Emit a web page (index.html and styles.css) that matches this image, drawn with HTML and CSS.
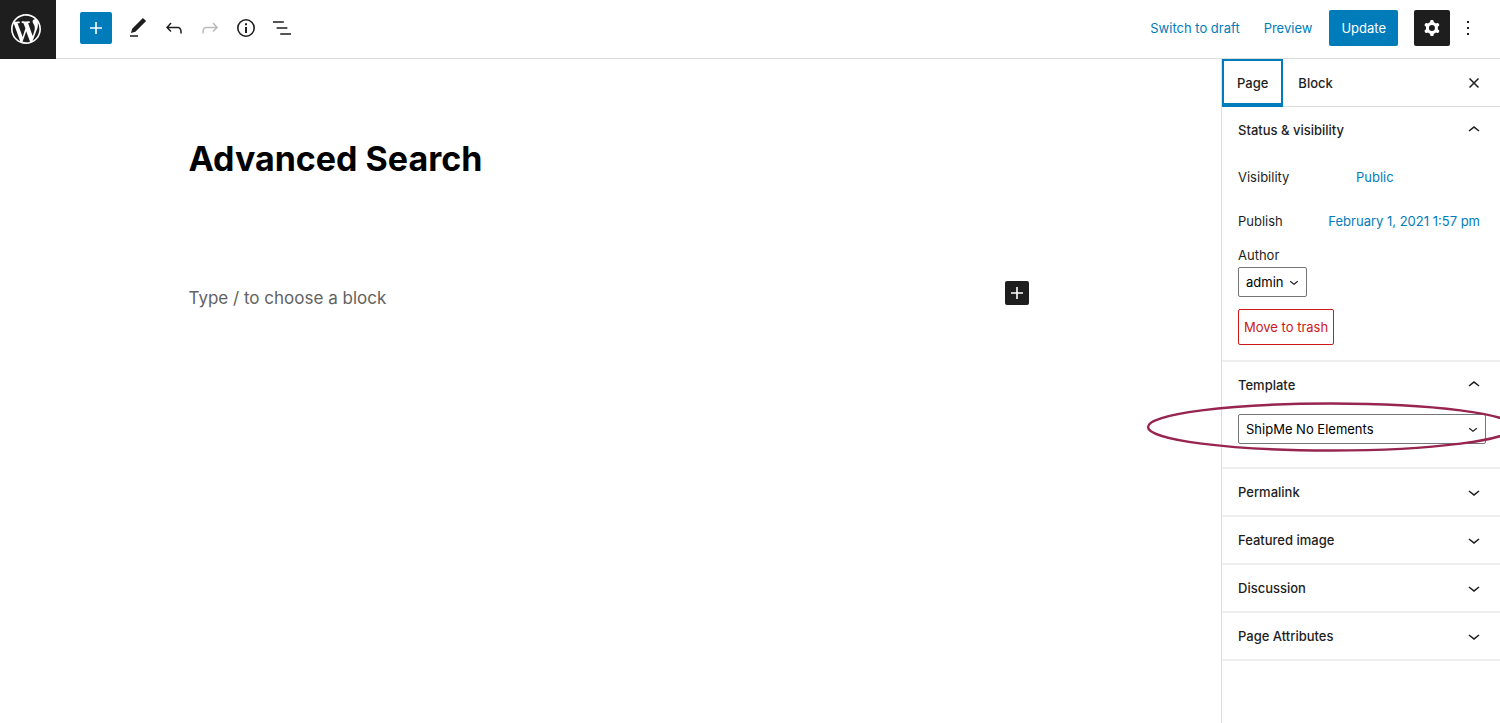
FILE: index.html
```html
<!DOCTYPE html>
<html lang="en">
<head>
<meta charset="utf-8">
<title>Edit Page</title>
<link rel="stylesheet" href="styles.css">
</head>
<body>
<div class="editor">
  <header class="topbar">
    <a class="site-logo" href="#" aria-label="View pages">
      <svg width="36" height="36" viewBox="-2 -2 24 24"><path d="M20 10c0-5.51-4.49-10-10-10C4.48 0 0 4.49 0 10c0 5.52 4.48 10 10 10 5.51 0 10-4.48 10-10zM7.78 15.37L4.37 6.22c.55-.02 1.17-.08 1.17-.08.5-.06.44-1.13-.06-1.11 0 0-1.45.11-2.37.11-.18 0-.37 0-.58-.01C4.12 2.69 6.87 1.11 10 1.11c2.33 0 4.45.87 6.05 2.34-.68-.11-1.65.39-1.65 1.58 0 .74.45 1.36.9 2.1.35.61.55 1.36.55 2.46 0 1.49-1.4 5-1.4 5l-3.03-8.37c.54-.02.82-.17.82-.17.5-.05.44-1.25-.06-1.22 0 0-1.44.12-2.38.12-.87 0-2.33-.12-2.33-.12-.5-.03-.56 1.2-.06 1.22l.92.08 1.26 3.41zM17.41 10c.24-.64.74-1.87.43-4.25.7 1.29 1.05 2.71 1.05 4.25 0 3.29-1.73 6.24-4.4 7.78.97-2.59 1.94-5.2 2.92-7.78zM6.1 18.09C3.12 16.65 1.11 13.53 1.11 10c0-1.3.23-2.48.72-3.59C3.25 10.3 4.67 14.2 6.1 18.09zm4.03-6.63l2.58 6.98c-.86.29-1.76.45-2.71.45-.79 0-1.57-.11-2.29-.33.81-2.38 1.62-4.74 2.42-7.1z"/></svg>
    </a>
    <div class="tools">
      <button class="add-block" aria-label="Add block"><svg width="24" height="24" viewBox="0 0 24 24"><path d="M18 11.2h-5.2V6h-1.6v5.2H6v1.6h5.2V18h1.6v-5.2H18z"/></svg></button>
      <button class="tool" aria-label="Tools"><svg width="24" height="24" viewBox="0 0 24 24"><path d="M20.1 5.1L16.9 2 6.2 12.7l-1.3 4.4 4.5-1.3L20.1 5.1zM4 20.8h8v-1.5H4v1.5z"/></svg></button>
      <button class="tool" aria-label="Undo"><svg width="24" height="24" viewBox="0 0 24 24"><path d="M18.3 11.7c-.6-.6-1.4-.9-2.3-.9H6.7l2.9-3.3-1.1-1-4.5 5L8.5 16l1-1-2.7-2.7H16c.5 0 .9.2 1.3.5 1 1 1 3.4 1 4.5v.3h1.5v-.2c0-1.5 0-4.3-1.5-5.7z"/></svg></button>
      <button class="tool" aria-label="Redo" disabled><svg width="24" height="24" viewBox="0 0 24 24"><path d="M15.6 6.5l-1.1 1 2.9 3.3H8c-.9 0-1.7.3-2.3.9-1.4 1.5-1.4 4.2-1.4 5.6v.2h1.5v-.3c0-1.1 0-3.5 1-4.5.3-.3.7-.5 1.3-.5h9.2L14.5 15l1.1 1.1 4.6-4.6-4.6-5z"/></svg></button>
      <button class="tool" aria-label="Details"><svg width="24" height="24" viewBox="0 0 24 24"><circle cx="12" cy="12" r="8.2" fill="none" stroke="currentColor" stroke-width="1.6"/><path d="M11 7.2h2v2h-2zM11 11h2v6h-2z"/></svg></button>
      <button class="tool" aria-label="List view"><svg width="24" height="24" viewBox="0 0 24 24"><path d="M13.8 5.2H3v1.5h10.8V5.2zm-3.6 12v1.5H21v-1.5H10.2zm7.2-6H6.6v1.5h10.8v-1.5z"/></svg></button>
    </div>
    <div class="actions">
      <button class="text-button">Switch to draft</button>
      <button class="text-button">Preview</button>
      <button class="update">Update</button>
      <button class="settings" aria-label="Settings"><svg width="24" height="24" viewBox="0 0 24 24"><path fill-rule="evenodd" d="M10.289 4.836A1 1 0 0111.275 4h1.306a1 1 0 01.987.836l.244 1.466c.787.26 1.503.679 2.108 1.218l1.393-.522a1 1 0 011.216.437l.653 1.13a1 1 0 01-.23 1.273l-1.148.944a6.025 6.025 0 010 2.435l1.149.946a1 1 0 01.23 1.272l-.653 1.13a1 1 0 01-1.216.437l-1.394-.522c-.605.54-1.32.958-2.108 1.218l-.244 1.466a1 1 0 01-.987.836h-1.306a1 1 0 01-.986-.836l-.244-1.466a5.995 5.995 0 01-2.108-1.218l-1.394.522a1 1 0 01-1.217-.436l-.653-1.131a1 1 0 01.23-1.272l1.149-.946a6.026 6.026 0 010-2.435l-1.148-.944a1 1 0 01-.23-1.272l.653-1.131a1 1 0 011.217-.437l1.393.522a5.994 5.994 0 012.108-1.218l.244-1.466zM14.929 12a3 3 0 11-6 0 3 3 0 016 0z"/></svg></button>
      <button class="tool" aria-label="Options"><svg width="24" height="24" viewBox="0 0 24 24"><path d="M11 5h2v2h-2zM11 11h2v2h-2zM11 17h2v2h-2z"/></svg></button>
    </div>
  </header>

  <div class="workspace">
    <main class="canvas">
      <div class="content">
        <h1 class="title">Advanced Search</h1>
        <div class="block-row">
          <p class="prompt">Type / to choose a block</p>
          <button class="inserter" aria-label="Add block"><svg width="24" height="24" viewBox="0 0 24 24"><path d="M18 11.2h-5.2V6h-1.6v5.2H6v1.6h5.2V18h1.6v-5.2H18z"/></svg></button>
        </div>
      </div>
    </main>

    <aside class="sidebar">
      <div class="tabs">
        <button class="tab tab-active">Page</button>
        <button class="tab">Block</button>
        <button class="close" aria-label="Close settings"><svg width="24" height="24" viewBox="0 0 24 24"><path d="M7.5 7.5l9 9M16.5 7.5l-9 9" fill="none" stroke="currentColor" stroke-width="1.5"/></svg></button>
      </div>

      <section class="panel">
        <button class="panel-head" aria-expanded="true">Status &amp; visibility<svg width="24" height="24" viewBox="0 0 24 24"><path d="M6.5 12.4L12 8l5.5 4.4-.9 1.2L12 10l-4.5 3.6-1-1.2z"/></svg></button>
        <div class="status">
          <div class="field"><span class="field-name">Visibility</span><button class="text-button">Public</button></div>
          <div class="field field-spread"><span>Publish</span><button class="text-button">February 1, 2021 1:57 pm</button></div>
          <label class="author-label" for="author">Author</label>
          <div class="select author-select">
            <select id="author"><option>admin</option></select>
            <svg width="18" height="18" viewBox="0 0 24 24"><path d="M17.5 11.6L12 16l-5.5-4.4.9-1.2L12 14l4.5-3.6 1 1.2z"/></svg>
          </div>
          <button class="trash">Move to trash</button>
        </div>
      </section>

      <section class="panel">
        <button class="panel-head" aria-expanded="true">Template<svg width="24" height="24" viewBox="0 0 24 24"><path d="M6.5 12.4L12 8l5.5 4.4-.9 1.2L12 10l-4.5 3.6-1-1.2z"/></svg></button>
        <div class="template">
          <div class="select">
            <select aria-label="Template"><option>ShipMe No Elements</option></select>
            <svg width="18" height="18" viewBox="0 0 24 24"><path d="M17.5 11.6L12 16l-5.5-4.4.9-1.2L12 14l4.5-3.6 1 1.2z"/></svg>
          </div>
          <svg class="highlight" width="370" height="50" viewBox="0 0 370 50"><ellipse cx="185" cy="25" rx="183" ry="23.5" fill="none" stroke="#97254f" stroke-width="2.5"/></svg>
        </div>
      </section>

      <section class="panel"><button class="panel-head" aria-expanded="false">Permalink<svg width="24" height="24" viewBox="0 0 24 24"><path d="M17.5 11.6L12 16l-5.5-4.4.9-1.2L12 14l4.5-3.6 1 1.2z"/></svg></button></section>
      <section class="panel"><button class="panel-head" aria-expanded="false">Featured image<svg width="24" height="24" viewBox="0 0 24 24"><path d="M17.5 11.6L12 16l-5.5-4.4.9-1.2L12 14l4.5-3.6 1 1.2z"/></svg></button></section>
      <section class="panel"><button class="panel-head" aria-expanded="false">Discussion<svg width="24" height="24" viewBox="0 0 24 24"><path d="M17.5 11.6L12 16l-5.5-4.4.9-1.2L12 14l4.5-3.6 1 1.2z"/></svg></button></section>
      <section class="panel"><button class="panel-head" aria-expanded="false">Page Attributes<svg width="24" height="24" viewBox="0 0 24 24"><path d="M17.5 11.6L12 16l-5.5-4.4.9-1.2L12 14l4.5-3.6 1 1.2z"/></svg></button></section>
    </aside>
  </div>
</div>
</body>
</html>
```
FILE: styles.css
```css
* { box-sizing: border-box; }

body {
  margin: 0;
  background: #fff;
  color: #1e1e1e;
  font: 13px/20px Inter, "Liberation Sans", sans-serif;
}

button, select {
  margin: 0;
  padding: 0;
  border: 0;
  border-radius: 2px;
  background: none;
  color: inherit;
  font: inherit;
}

svg { display: block; flex: none; fill: currentColor; }

.editor {
  display: flex;
  flex-direction: column;
  min-height: 100vh;
  overflow: hidden;
}

.topbar {
  display: flex;
  align-items: stretch;
  border-bottom: 1px solid #ddd;
}

.site-logo {
  display: flex;
  align-items: center;
  width: 56px;
  height: 59px;
  margin-bottom: -1px;
  padding-left: 8px;
  padding-bottom: 2px;
  background: #1e1e1e;
  color: #fff;
}

.tools, .actions {
  display: flex;
  align-items: center;
  padding-bottom: 2px;
}

.tools { padding-left: 24px; }

.tool, .add-block, .settings, .inserter {
  display: flex;
  align-items: center;
  justify-content: center;
}

.tool { width: 36px; height: 36px; }
.tool:disabled { color: #bbb; }

.add-block {
  width: 32px;
  height: 32px;
  margin-right: 8px;
  background: #007cba;
  color: #fff;
}

.actions { margin-left: auto; padding-right: 14px; }
.text-button { color: #007cba; }
.actions .text-button { margin-right: 24px; }

.update {
  height: 36px;
  margin-left: -7px;
  margin-right: 16px;
  padding: 0 12px;
  background: #007cba;
  color: #fff;
}

.settings {
  width: 36px;
  height: 36px;
  background: #1e1e1e;
  color: #fff;
}

.workspace { display: flex; flex: 1; }

.canvas { flex: 1; padding: 76px 36px 76px 32px; }

.content { max-width: 840px; margin: 0 auto; }

.title {
  margin: 0 0 98px;
  color: #000;
  font-size: 34px;
  line-height: 48px;
  font-weight: 700;
}

.block-row {
  display: flex;
  align-items: flex-start;
  justify-content: space-between;
}

.prompt {
  margin: 0;
  color: #626262;
  font-size: 17px;
  line-height: 34px;
}

.inserter {
  width: 24px;
  height: 24px;
  background: #1e1e1e;
  color: #fff;
}

.sidebar {
  width: 279px;
  border-left: 1px solid #ddd;
}

.tabs {
  display: flex;
  height: 48px;
  border-bottom: 1px solid #ddd;
}

.tab {
  height: 48px;
  padding: 0 15px;
  border-radius: 0;
  font-weight: 500;
}

.tab-active { box-shadow: inset 0 0 0 2px #007cba, inset 0 -4px 0 0 #007cba; }

.close { margin: 0 14px 0 auto; }

.panel { border-bottom: 2px solid #eee; }

.panel-head {
  display: flex;
  align-items: center;
  justify-content: space-between;
  width: 100%;
  height: 46px;
  padding: 0 14px 0 16px;
  font-weight: 500;
  text-align: left;
}

.status { padding: 6px 16px 15px; }

.field {
  display: flex;
  align-items: center;
  height: 36px;
  margin-bottom: 8px;
}

.field-name { width: 118px; }

.field-spread {
  justify-content: space-between;
  margin-bottom: 4px;
  padding-right: 4px;
}

.author-label { display: block; line-height: 24px; }

.select {
  position: relative;
  display: flex;
  align-items: center;
}

.select select {
  width: 100%;
  height: 30px;
  padding: 0 20px 0 7px;
  border: 1px solid #757575;
  background: #fff;
  color: #000;
  appearance: none;
}

.select svg {
  position: absolute;
  right: 4px;
  pointer-events: none;
}

.author-select { width: 69px; }

.trash {
  height: 36px;
  margin-top: 12px;
  padding: 0 5px;
  border: 1px solid #cc1818;
  color: #cc1818;
}

.template {
  position: relative;
  padding: 6px 14px 23px 16px;
}

.highlight {
  position: absolute;
  top: -6px;
  left: -76px;
  pointer-events: none;
}
```
